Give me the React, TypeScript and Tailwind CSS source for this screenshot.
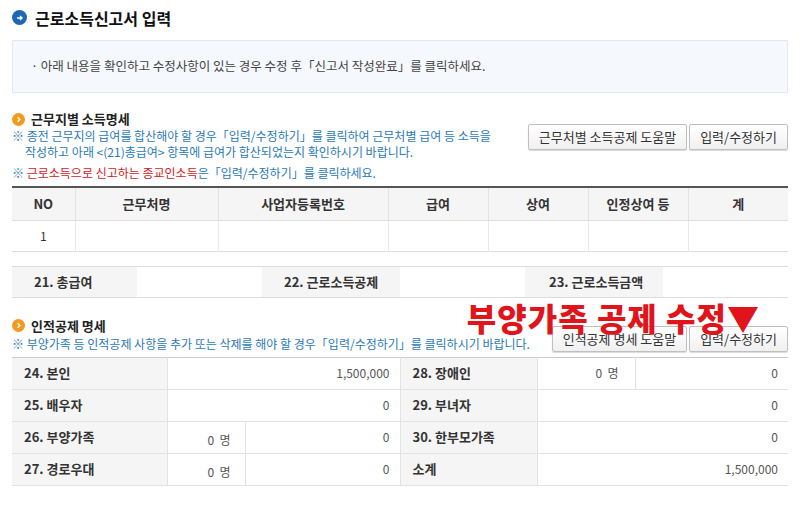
import React from 'react';

const F = { fontFamily: '"Noto Sans CJK KR", "Noto Sans", sans-serif' };

function Bullet() {
  return (
    <span className="inline-flex w-[13px] h-[13px] rounded-full bg-[#f39a1e] items-center justify-center mr-[6px]">
      <svg width="7" height="7" viewBox="0 0 8 8"><path d="M3 1.5 L5.5 4 L3 6.5" stroke="#fff" strokeWidth="1.6" fill="none" /></svg>
    </span>
  );
}

function Btn({ children }: { children: React.ReactNode }) {
  return (
    <button className="h-[26px] px-[10px] border border-[#bfbfbf] rounded-[2px] bg-gradient-to-b from-white to-[#f0f0f0] text-[13px] text-[#333] shadow-[0_1px_1px_rgba(0,0,0,0.15)]">
      {children}
    </button>
  );
}

const th = 'border-l border-[#e2e2e2] first:border-l-0 font-bold text-[#333] text-[13px] text-center';
const lab = 'bg-[#f5f5f5] font-bold text-[13px] text-[#333] pl-[12px] text-left';
const val = 'text-right pr-[10px] text-[12px] text-[#555] border-l border-[#e2e2e2]';

export default function App() {
  return (
    <div style={F} className="w-[800px] h-[507px] bg-white px-[12px] overflow-hidden text-[#333]">
      <div className="flex items-center h-[34px] pt-[1px]">
        <span className="w-[15px] h-[15px] rounded-full bg-[#1f66b3] flex items-center justify-center mr-[8px]">
          <svg width="8" height="8" viewBox="0 0 8 8"><path d="M1 4 H6 M4 2 L6 4 L4 6" stroke="#fff" strokeWidth="1.4" fill="none" /></svg>
        </span>
        <span className="text-[16px] font-bold text-[#111]">근로소득신고서 입력</span>
      </div>
      <div className="mt-[6px] h-[53px] bg-[#f5f8fc] border border-[#e3e8ee] flex items-center pl-[18px] text-[12.5px] text-[#444]">
        · 아래 내용을 확인하고 수정사항이 있는 경우 수정 후「신고서 작성완료」를 클릭하세요.
      </div>

      <div className="flex mt-[18px]">
        <div className="flex-1">
          <div className="flex items-center text-[13px] font-bold text-[#222] h-[16px]"><Bullet />근무지별 소득명세</div>
          <div className="text-[12px] leading-[16px] text-[#2a7ab8] mt-[1px]">
            ※ 종전 근무지의 급여를 합산해야 할 경우「입력/수정하기」를 클릭하여 근무처별 급여 등 소득을<br />
            <span className="pl-[13px]">작성하고 아래 &lt;(21)총급여&gt; 항목에 급여가 합산되었는지 확인하시기 바랍니다.</span>
          </div>
        </div>
        <div className="flex gap-[2px] mt-[13px]">
          <Btn>근무처별 소득공제 도움말</Btn>
          <Btn>입력/수정하기</Btn>
        </div>
      </div>
      <div className="text-[12px] mt-[5px] text-[#2a7ab8] h-[16px] leading-[16px]">
        ※ <span className="text-[#d31a1a]">근로소득으로 신고하는 종교인소득</span>은「입력/수정하기」를 클릭하세요.
      </div>

      <table className="w-full mt-[5px] border-collapse border-t-2 border-[#555] table-fixed">
        <colgroup>
          <col className="w-[63px]" /><col className="w-[143px]" /><col className="w-[170px]" /><col className="w-[100px]" /><col className="w-[100px]" /><col className="w-[100px]" /><col />
        </colgroup>
        <thead>
          <tr className="h-[33px] bg-[#f5f5f5] border-b border-[#ddd]">
            {['NO', '근무처명', '사업자등록번호', '급여', '상여', '인정상여 등', '계'].map((h) => (
              <th key={h} className={th}>{h}</th>
            ))}
          </tr>
        </thead>
        <tbody>
          <tr className="h-[31px] border-b border-[#ddd]">
            <td className="text-center text-[12px]">1</td>
            {[0, 1, 2, 3, 4, 5].map((i) => <td key={i} className="border-l border-[#e8e8e8]" />)}
          </tr>
        </tbody>
      </table>

      <table className="w-full mt-[14px] border-collapse table-fixed border-t border-b border-[#ddd]">
        <colgroup>
          <col className="w-[125px]" /><col className="w-[125px]" /><col className="w-[138px]" /><col className="w-[125px]" /><col className="w-[138px]" /><col />
        </colgroup>
        <tbody>
          <tr className="h-[31px]">
            <td className={lab + ' pl-[22px]'}>21. 총급여</td><td />
            <td className={lab + ' pl-[22px]'}>22. 근로소득공제</td><td />
            <td className={lab + ' pl-[24px]'}>23. 근로소득금액</td><td />
          </tr>
        </tbody>
      </table>

      <div className="relative flex items-end mt-[20px]">
        <div className="flex-1 whitespace-nowrap">
          <div className="flex items-center text-[13px] font-bold text-[#222] h-[16px]"><Bullet />인적공제 명세</div>
          <div className="text-[12px] leading-[16px] text-[#2a7ab8] mt-[2px]">
            ※ 부양가족 등 인적공제 사항을 추가 또는 삭제를 해야 할 경우「입력/수정하기」를 클릭하시기 바랍니다.
          </div>
        </div>
        <div className="flex gap-[2px] bg-white pl-[2px]">
          <Btn>인적공제 명세 도움말</Btn>
          <Btn>입력/수정하기</Btn>
        </div>
        <div className="absolute right-[28px] top-[-18px] text-[32px] font-black text-[#e0141a] leading-[34px] tracking-[1px] whitespace-nowrap">부양가족 공제 수정▼</div>
      </div>

      <table className="w-full mt-[5px] border-collapse table-fixed border-t border-b border-[#ccc]">
        <colgroup>
          <col className="w-[155px]" /><col className="w-[78px]" /><col className="w-[155px]" /><col className="w-[137px]" /><col className="w-[98px]" /><col />
        </colgroup>
        <tbody className="[&>tr]:h-[32px] [&>tr]:border-b [&>tr]:border-[#e2e2e2]">
          <tr>
            <td className={lab}>24. 본인</td><td colSpan={2} className={val}>1,500,000</td>
            <td className={lab + ' border-l border-[#e2e2e2]'}>28. 장애인</td><td className={val + ' pr-[16px]'}>0&nbsp;&nbsp;명</td><td className={val}>0</td>
          </tr>
          <tr>
            <td className={lab}>25. 배우자</td><td colSpan={2} className={val}>0</td>
            <td className={lab + ' border-l border-[#e2e2e2]'}>29. 부녀자</td><td colSpan={2} className={val}>0</td>
          </tr>
          <tr>
            <td className={lab}>26. 부양가족</td><td className={val + ' pr-[14px] pt-[6px]'}>0&nbsp;&nbsp;명</td><td className={val}>0</td>
            <td className={lab + ' border-l border-[#e2e2e2]'}>30. 한부모가족</td><td colSpan={2} className={val}>0</td>
          </tr>
          <tr>
            <td className={lab}>27. 경로우대</td><td className={val + ' pr-[14px] pt-[6px]'}>0&nbsp;&nbsp;명</td><td className={val}>0</td>
            <td className={lab + ' border-l border-[#e2e2e2]'}>소계</td><td colSpan={2} className={val}>1,500,000</td>
          </tr>
        </tbody>
      </table>
    </div>
  );
}
